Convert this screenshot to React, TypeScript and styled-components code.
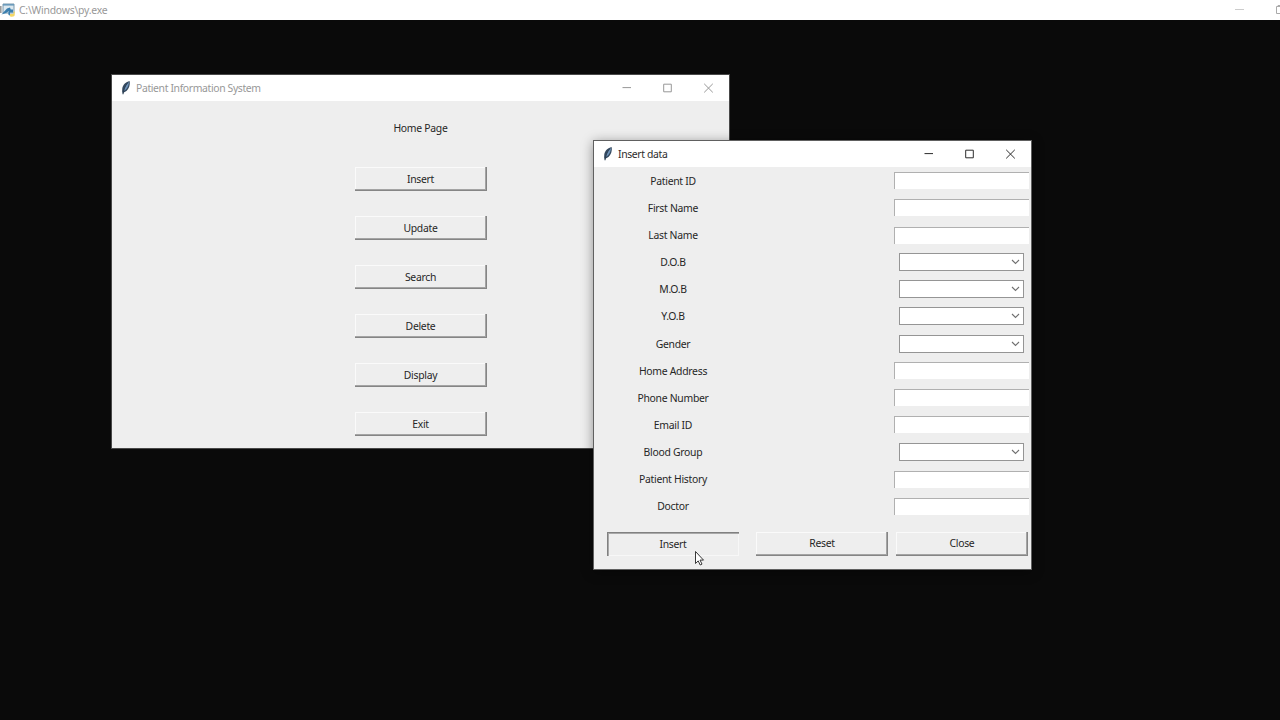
import React from "react";
import styled, { createGlobalStyle, css } from "styled-components";

const GlobalStyle = createGlobalStyle`
  * { box-sizing: border-box; }
  body { margin: 0; overflow: hidden; background: #0a0a0a; }
`;

const Desktop = styled.main`
  position: relative;
  width: 1280px;
  height: 720px;
  overflow: hidden;
  background: #0a0a0a;
  color: #262626;
  font: 10.4px/14px "Noto Sans", "Open Sans", sans-serif;
`;

const ConsoleBar = styled.header`
  display: flex;
  align-items: center;
  height: 20px;
  background: #fff;
  color: #989898;
  letter-spacing: -0.22px;
`;

const ConsoleTitle = styled.span`
  margin-left: 2px;
  flex: 1;
  white-space: nowrap;
`;

const ConsoleControls = styled.svg`
  width: 50px;
  height: 20px;
`;

const Window = styled.section<{ $x: number; $y: number; $w: number; $h: number; $active?: boolean }>`
  position: absolute;
  left: ${(p) => p.$x}px;
  top: ${(p) => p.$y}px;
  width: ${(p) => p.$w}px;
  height: ${(p) => p.$h}px;
  display: flex;
  flex-direction: column;
  background: #eee;
  box-shadow: ${(p) => (p.$active ? "0 0 0 1px #606060, 0 2px 11px 1px rgba(0,0,0,.4)" : "0 0 0 1px #484848")};
`;

const TitleBar = styled.div<{ $active?: boolean }>`
  display: flex;
  align-items: center;
  flex: none;
  height: 26px;
  padding-left: 8px;
  background: #fff;
  color: ${(p) => (p.$active ? "#2c2c2c" : "#989898")};
`;

const Title = styled.span`
  flex: 1;
  margin-left: 4px;
  white-space: nowrap;
  letter-spacing: -0.36px;
`;

const Controls = styled.svg`
  width: 123px;
  height: 26px;
  fill: none;
  stroke: currentColor;
`;

const HomeBody = styled.div`
  display: flex;
  flex-direction: column;
  align-items: center;
  padding-top: 20px;
`;

const ButtonStack = styled.div`
  display: flex;
  flex-direction: column;
  gap: 25px;
  margin-top: 32px;
`;

const Button = styled.button<{ $pressed?: boolean }>`
  width: 132px;
  height: 24px;
  padding: 0 0 1px;
  background: #eee;
  color: inherit;
  font: inherit;
  border: 0;
  letter-spacing: -0.3px;
  ${(p) =>
    p.$pressed
      ? css`
          padding: 1px 0 0;
          box-shadow: inset 1px 1px #808080, inset 2px 2px #a8a8a8, inset -1px -1px #f7f7f7;
        `
      : css`
          box-shadow: inset -1px -1px #858585, inset -2px -2px #a4a4a4, inset 1px 1px #fafafa;
        `}
`;

const Form = styled.div`
  display: grid;
  padding-top: 0.2px;
  grid-template-rows: repeat(13, 27.13px);
`;

const FormRow = styled.label`
  display: grid;
  grid-template-columns: 158px 142px 138px;
  align-items: center;
`;

const Label = styled.span`
  text-align: center;
  letter-spacing: -0.28px;
  white-space: nowrap;
`;

const Entry = styled.input`
  grid-column: 3;
  width: 135px;
  height: 17px;
  margin: 0;
  padding: 0 2px;
  border: solid #b0b0b0;
  border-width: 1px 0 0 1px;
  background: #fff;
  outline: 0;
  font: inherit;
`;

const Combo = styled.span`
  grid-column: 3;
  display: flex;
  align-items: center;
  justify-content: flex-end;
  width: 125px;
  height: 18px;
  margin-left: 5px;
  padding-right: 3px;
  border: 1px solid #959595;
  background: #fff;
`;

const Actions = styled.div`
  display: flex;
  margin: 12px 0 0 13px;
`;

const ActionSlot = styled.div<{ $gap: number }>`
  margin-right: ${(p) => p.$gap}px;
  line-height: 0;
`;

const Pointer = styled.svg`
  position: absolute;
  left: 694px;
  top: 550px;
  width: 11px;
  height: 18px;
`;

function Feather() {
  return (
    <svg width="12" height="16" viewBox="0 0 12 16">
      <path d="M9.6 1C6 2 3 4.6 2.3 8.2L2.1 11.6l.9 3.4.8-2.6c3.8-1 6.9-6.2 5.8-11.4Z" fill="#34495f" />
      <path d="M8.9 2C6.6 4.2 4.6 7.2 3.9 10.8c2.9-1.4 5-4.9 5-8.8Z" fill="#6f94bb" />
      <path d="M7.6 3.2C5.2 5.9 3.8 9.4 3 13.8" fill="none" stroke="#26384b" strokeWidth=".7" />
    </svg>
  );
}

function PyLauncherIcon() {
  return (
    <svg width="17" height="20" viewBox="0 0 17 20">
      <path d="M0 6h1.6v7H0z" fill="#9b9b9b" />
      <path d="M3 4h11v9H3z" fill="#dce8ef" stroke="#7b99ad" />
      <path d="M3 4h11v1.6H3z" fill="#6b9abb" />
      <path d="M1.5 14.5 7 8.5l3-1 .8 2.3L6 13Z" fill="#397eae" />
      <path d="M8.5 12c0-2 1-2.5 3-2.5h1.5v3h-3v3c-1.5 0-2-1-1.5-3.5Z" fill="#397eae" />
      <path d="M14.8 11.5v2.8c0 1.8-1 2.4-3 2.4-1.7 0-2.2-.6-1.8-2.8h3.5v-2.4Z" fill="#f4d765" />
    </svg>
  );
}

function WindowControls() {
  return (
    <Controls viewBox="0 0 123 26">
      <path d="M16.5 12.6h8.5" />
      <path d="M57.7 9.2h7.6v7.6h-7.6z" />
      <path d="m98.2 8.8 8.6 8.6m0-8.6-8.6 8.6" />
    </Controls>
  );
}

const actions = ["Insert", "Update", "Search", "Delete", "Display", "Exit"];
const fields: { name: string; combo?: boolean }[] = [
  { name: "Patient ID" },
  { name: "First Name" },
  { name: "Last Name" },
  { name: "D.O.B", combo: true },
  { name: "M.O.B", combo: true },
  { name: "Y.O.B", combo: true },
  { name: "Gender", combo: true },
  { name: "Home Address" },
  { name: "Phone Number" },
  { name: "Email ID" },
  { name: "Blood Group", combo: true },
  { name: "Patient History" },
  { name: "Doctor" },
];

export default function App() {
  return (
    <Desktop>
      <GlobalStyle />
      <ConsoleBar>
        <PyLauncherIcon />
        <ConsoleTitle>C:\Windows\py.exe</ConsoleTitle>
        <ConsoleControls viewBox="0 0 50 20" fill="none">
          <path d="M5 9.5h9" stroke="#ccc" />
          <path d="M54 13.5h-7.5v-7H54M48 6V5.5h5" stroke="#aaa" />
        </ConsoleControls>
      </ConsoleBar>

      <Window $x={112} $y={75} $w={617} $h={373}>
        <TitleBar>
          <Feather />
          <Title>Patient Information System</Title>
          <WindowControls />
        </TitleBar>
        <HomeBody>
          <Label>Home Page</Label>
          <ButtonStack>
            {actions.map((name) => (
              <Button key={name}>{name}</Button>
            ))}
          </ButtonStack>
        </HomeBody>
      </Window>

      <Window $x={594} $y={141} $w={437} $h={428} $active>
        <TitleBar $active>
          <Feather />
          <Title>Insert data</Title>
          <WindowControls />
        </TitleBar>
        <Form>
          {fields.map(({ name, combo }) => (
            <FormRow key={name}>
              <Label>{name}</Label>
              {combo ? (
                <Combo>
                  <svg width="9" height="6" viewBox="0 0 9 6" fill="none" stroke="#707070" strokeWidth="1.1">
                    <path d="m1 1 3.5 3.5L8 1" />
                  </svg>
                </Combo>
              ) : (
                <Entry aria-label={name} />
              )}
            </FormRow>
          ))}
        </Form>
        <Actions>
          <ActionSlot $gap={17}>
            <Button $pressed>Insert</Button>
          </ActionSlot>
          <ActionSlot $gap={8}>
            <Button>Reset</Button>
          </ActionSlot>
          <ActionSlot $gap={0}>
            <Button>Close</Button>
          </ActionSlot>
        </Actions>
      </Window>

      <Pointer viewBox="0 0 11 18">
        <path d="M1.5 1.5v12l2.7-2.6 2 4.1 1.8-.9-2-4H9.5Z" fill="#fff" stroke="#222" strokeWidth=".9" />
      </Pointer>
    </Desktop>
  );
}
